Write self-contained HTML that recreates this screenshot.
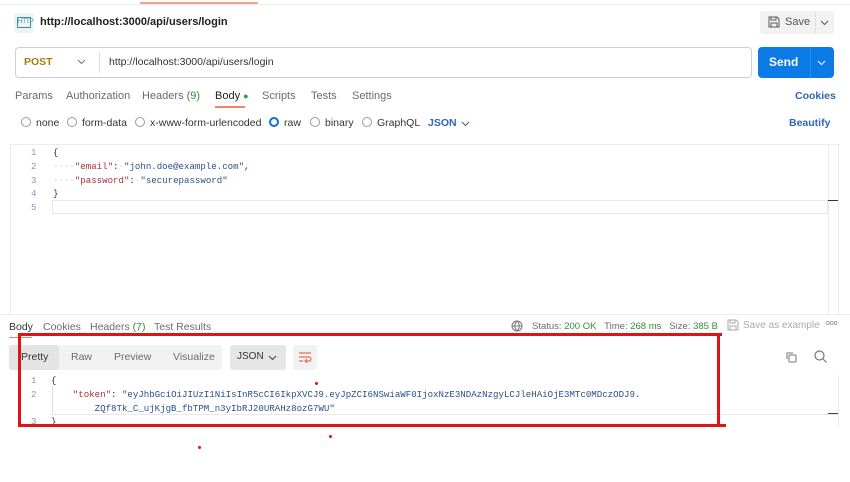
<!DOCTYPE html>
<html><head><style>
*{margin:0;padding:0;box-sizing:border-box}
body{width:850px;height:482px;background:#fff;font-family:"Liberation Sans",sans-serif;font-size:11px;color:#212121;position:relative;overflow:hidden}
.a{position:absolute;white-space:nowrap}
.g{color:#6b6b6b}
.mono{font-family:"Liberation Mono",monospace;font-size:9.1px}
.ln{color:#8a9aa6}
.k{color:#a3333a}
.s{color:#2b4f8c}
.radio{display:inline-block;width:10px;height:10px;border:1px solid #9a9a9a;border-radius:50%;vertical-align:-1px;margin-right:5px}
.red{position:absolute;background:#e01414}
</style></head><body>
<div class="a" style="left:140px;top:2px;width:118px;height:2px;background:#f0a585"></div>
<div class="a" style="left:0;top:4px;width:850px;height:1px;background:#eee"></div>
<div class="a" style="left:14px;top:13px;width:20px;height:20px;background:#eef3f5;border-radius:3px"></div>
<div class="a" style="left:17px;top:17px;width:14px;height:11px;border:1px solid #3b8fa8;font-size:6px;color:#3b8fa8;line-height:9px;text-align:center">HTTP</div>
<div class="a" style="left:40px;top:16px;font-weight:bold;font-size:11px">http://localhost:3000/api/users/login</div>
<div class="a" style="left:760px;top:11px;width:74px;height:23px;background:#f2f2f2;border-radius:3px"></div>
<div class="a" style="left:815px;top:11px;width:1px;height:23px;background:#e2e2e2"></div>
<svg class="a" style="left:768px;top:16px" width="12" height="12" viewBox="0 0 12 12"><path d="M1 1h8l2 2v8H1z M3 1v3h5V1 M3 11V7h6v4" fill="none" stroke="#555" stroke-width="1"/></svg>
<div class="a g" style="left:785px;top:16px;color:#555">Save</div>
<svg class="a" style="left:820px;top:20px" width="9" height="6"><path d="M1 1l3.5 3.5L8 1" fill="none" stroke="#555"/></svg>
<div class="a" style="left:15px;top:47px;width:737px;height:31px;border:1px solid #cfcfcf;border-radius:4px"></div>
<div class="a" style="left:24px;top:56px;color:#a87a09;font-weight:bold;font-size:10.5px">POST</div>
<svg class="a" style="left:77px;top:59px" width="9" height="6"><path d="M1 1l3.5 3.5L8 1" fill="none" stroke="#777"/></svg>
<div class="a" style="left:99px;top:52px;width:1px;height:21px;background:#e0e0e0"></div>
<div class="a" style="left:109px;top:56px;color:#333;font-size:10.5px">http://localhost:3000/api/users/login</div>
<div class="a" style="left:758px;top:47px;width:76px;height:31px;background:#0d7be6;border-radius:4px"></div>
<div class="a" style="left:810px;top:47px;width:1px;height:31px;background:#2a8cef"></div>
<div class="a" style="left:769px;top:55px;color:#fff;font-weight:bold;font-size:12px">Send</div>
<svg class="a" style="left:817px;top:60px" width="9" height="6"><path d="M1 1l3.5 3.5L8 1" fill="none" stroke="#fff"/></svg>
<div class="a g" style="left:15px;top:90px">Params</div>
<div class="a g" style="left:66px;top:90px">Authorization</div>
<div class="a g" style="left:142px;top:90px">Headers <span style="color:#3a8a3a">(9)</span></div>
<div class="a" style="left:215px;top:90px">Body <span style="color:#1aa64a;font-size:9px">●</span></div>
<div class="a" style="left:215px;top:106px;width:30px;height:2px;background:#f08560"></div>
<div class="a g" style="left:262px;top:90px">Scripts</div>
<div class="a g" style="left:311px;top:90px">Tests</div>
<div class="a g" style="left:352px;top:90px">Settings</div>
<div class="a" style="left:795px;top:90px;color:#2f67b3;font-weight:bold;font-size:10.5px">Cookies</div>
<div class="a" style="left:21px;top:117px;color:#333;font-size:10.5px"><span class="radio"></span>none</div>
<div class="a" style="left:67px;top:117px;color:#333;font-size:10.5px"><span class="radio"></span>form-data</div>
<div class="a" style="left:135px;top:117px;color:#333;font-size:10.5px"><span class="radio"></span>x-www-form-urlencoded</div>
<div class="a" style="left:269px;top:117px;color:#333;font-size:10.5px"><span class="radio" style="border:2.5px solid #0d6fd6"></span>raw</div>
<div class="a" style="left:310px;top:117px;color:#333;font-size:10.5px"><span class="radio"></span>binary</div>
<div class="a" style="left:362px;top:117px;color:#333;font-size:10.5px"><span class="radio"></span>GraphQL</div>
<div class="a" style="left:428px;top:117px;color:#2f67b3;font-weight:bold;font-size:10.5px">JSON</div>
<svg class="a" style="left:461px;top:121px" width="9" height="6"><path d="M1 1l3.5 3.5L8 1" fill="none" stroke="#2f67b3"/></svg>
<div class="a" style="left:789px;top:117px;color:#2f67b3;font-weight:bold;font-size:10.5px">Beautify</div>
<div class="a" style="left:10px;top:144px;width:830px;height:1px;background:#ececec"></div>
<div class="a" style="left:10px;top:144px;width:1px;height:170px;background:#ececec"></div>
<div class="a" style="left:828px;top:144px;width:11px;height:170px;border-left:1px solid #ececec;border-right:1px solid #ececec"></div>
<div class="a" style="left:828px;top:200px;width:10px;height:1px;background:#333"></div>
<div class="a" style="left:52px;top:200px;width:776px;height:14px;border:1px solid #e8e8e8"></div>
<div class="a mono ln" style="left:31px;top:146px;line-height:13.8px">1<br>2<br>3<br>4<br>5</div>
<div class="a mono" style="left:53px;top:146px;line-height:13.8px;color:#333">{<br><span style="color:#ccc">····</span><span class="k">"email"</span>:<span style="color:#ccc">·</span><span class="s">"john.doe@example.com"</span>,<br><span style="color:#ccc">····</span><span class="k">"password"</span>:<span style="color:#ccc">·</span><span class="s">"securepassword"</span><br>}</div>
<div class="a" style="left:0;top:314px;width:850px;height:1px;background:#ececec"></div>
<div class="a" style="left:9px;top:321px;color:#333;font-size:10.5px">Body</div>
<div class="a" style="left:9px;top:337px;width:23px;height:1px;background:#f08560"></div>
<div class="a g" style="left:43px;top:321px;font-size:10.5px">Cookies</div>
<div class="a g" style="left:90px;top:321px;font-size:10.5px">Headers <span style="color:#3a8a3a">(7)</span></div>
<div class="a g" style="left:154px;top:321px;font-size:10.5px">Test Results</div>
<svg class="a" style="left:511px;top:320px" width="12" height="12"><circle cx="6" cy="6" r="5" fill="none" stroke="#777"/><path d="M1 6h10M6 1c-3 3-3 7 0 10M6 1c3 3 3 7 0 10" fill="none" stroke="#777"/></svg>
<div class="a g" style="left:532px;top:321px;font-size:9.5px">Status: <span style="color:#3a8a3a">200 OK</span>&nbsp;&nbsp; Time: <span style="color:#3a8a3a">268 ms</span>&nbsp;&nbsp; Size: <span style="color:#3a8a3a">385 B</span></div>
<svg class="a" style="left:727px;top:319px" width="12" height="12"><path d="M1 1h8l2 2v8H1z M3 1v3h5V1 M3 11V7h6v4" fill="none" stroke="#aaa"/></svg>
<div class="a" style="left:743px;top:320px;color:#aaa;font-size:10px">Save as example</div>
<div class="a" style="left:826px;top:320px;color:#777;font-size:7px">ooo</div>
<div class="a" style="left:9px;top:345px;width:213px;height:25px;background:#f2f2f2;border-radius:3px"></div>
<div class="a" style="left:9px;top:345px;width:50px;height:25px;background:#e4e4e4;border-radius:3px"></div>
<div class="a" style="left:21px;top:351px;color:#333;font-size:10.5px">Pretty</div>
<div class="a g" style="left:71px;top:351px;font-size:10.5px">Raw</div>
<div class="a g" style="left:114px;top:351px;font-size:10.5px">Preview</div>
<div class="a g" style="left:173px;top:351px;font-size:10.5px">Visualize</div>
<div class="a" style="left:230px;top:345px;width:56px;height:25px;background:#e6e6e6;border-radius:3px"></div>
<div class="a" style="left:237px;top:351px;color:#333;font-size:10px">JSON</div>
<svg class="a" style="left:268px;top:355px" width="9" height="6"><path d="M1 1l3.5 3.5L8 1" fill="none" stroke="#444"/></svg>
<div class="a" style="left:293px;top:345px;width:24px;height:25px;background:#f2f2f2;border-radius:3px"></div>
<svg class="a" style="left:298px;top:351px" width="14" height="12"><path d="M1 2h12M1 6h10a2 2 0 010 4H8M1 10h4M9 8l-2 2 2 2" fill="none" stroke="#e07050" stroke-width="1.2"/></svg>
<svg class="a" style="left:785px;top:351px" width="12" height="12"><rect x="4" y="4" width="7" height="7" rx="1" fill="none" stroke="#777"/><path d="M2 8V2h6" fill="none" stroke="#777"/></svg>
<svg class="a" style="left:814px;top:350px" width="13" height="13"><circle cx="5.5" cy="5.5" r="4.5" fill="none" stroke="#777" stroke-width="1.2"/><path d="M9 9l3.5 3.5" stroke="#777" stroke-width="1.2"/></svg>
<div class="a" style="left:52px;top:386px;width:1px;height:28px;background:#ddd"></div>
<div class="a mono ln" style="left:31px;top:374px;line-height:13.8px">1<br>2<br><br>3</div>
<div class="a mono" style="left:51px;top:374px;line-height:13.8px;color:#333">{<br>&nbsp;&nbsp;&nbsp;&nbsp;<span class="k">"token"</span>: <span class="s">"eyJhbGciOiJIUzI1NiIsInR5cCI6IkpXVCJ9.eyJpZCI6NSwiaWF0IjoxNzE3NDAzNzgyLCJleHAiOjE3MTc0MDczODJ9.</span><br><span class="s">&nbsp;&nbsp;&nbsp;&nbsp;&nbsp;&nbsp;&nbsp;&nbsp;ZQf8Tk_C_ujKjgB_fbTPM_n3yIbRJ20URAHz8ozG7WU"</span><br>}</div>
<div class="a" style="left:52px;top:414px;width:787px;height:1px;background:#e8e8e8"></div>
<div class="a" style="left:838px;top:375px;width:1px;height:52px;background:#ececec"></div>
<div class="a" style="left:828px;top:413px;width:10px;height:1px;background:#444"></div>
<div class="red" style="left:18px;top:333px;width:704px;height:3px"></div>
<div class="red" style="left:18px;top:333px;width:3px;height:94px"></div>
<div class="red" style="left:717px;top:333px;width:3px;height:94px"></div>
<div class="red" style="left:18px;top:424px;width:708px;height:3px"></div>
<div class="red" style="left:315px;top:382px;width:3px;height:3px;border-radius:50%"></div>
<div class="red" style="left:329px;top:435px;width:3px;height:3px;border-radius:50%"></div>
<div class="red" style="left:198px;top:446px;width:3px;height:3px;border-radius:50%"></div>
</body></html>
